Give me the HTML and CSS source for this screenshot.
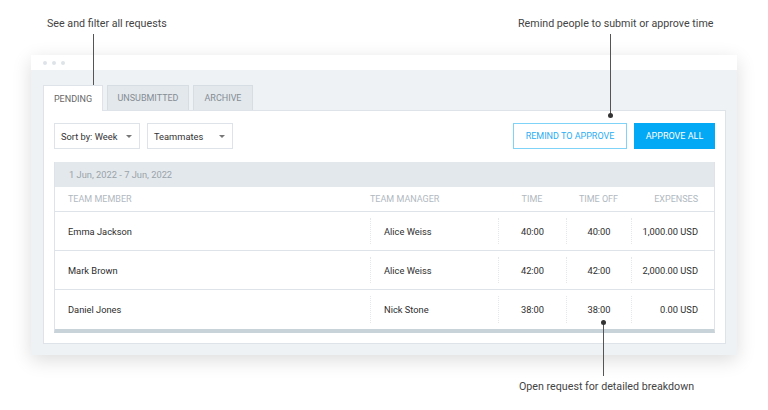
FILE: index.html
```html
<!DOCTYPE html>
<html lang="en">
<head>
    <meta charset="UTF-8">
    <title>Pending requests</title>
    <link rel="stylesheet" href="styles.css">
</head>
<body>
    <div class="stage">
        <div class="window">
            <div class="titlebar">
                <span class="dot"></span><span class="dot"></span><span class="dot"></span>
            </div>
            <div class="window-body">
                <div class="tabs">
                    <div class="tab tab-sm active">PENDING</div>
                    <div class="tab tab-lg">UNSUBMITTED</div>
                    <div class="tab tab-sm">ARCHIVE</div>
                </div>
                <div class="panel">
                    <div class="toolbar">
                        <div class="dropdown">Sort by: Week <span class="caret"></span></div>
                        <div class="dropdown">Teammates <span class="caret"></span></div>
                        <div class="spacer"></div>
                        <button class="btn btn-outline">REMIND TO APPROVE</button>
                        <button class="btn btn-primary">APPROVE ALL</button>
                    </div>

                    <div class="requests">
                        <div class="date-row">1 Jun, 2022 - 7 Jun, 2022</div>
                        <div class="row head">
                            <div class="cell member">TEAM MEMBER</div>
                            <div class="cell manager">TEAM MANAGER</div>
                            <div class="cell center">TIME</div>
                            <div class="cell center">TIME OFF</div>
                            <div class="cell right">EXPENSES</div>
                        </div>
                        <div class="row">
                            <div class="cell member">Emma Jackson</div>
                            <div class="cell manager sep">Alice Weiss</div>
                            <div class="cell center sep">40:00</div>
                            <div class="cell center sep">40:00</div>
                            <div class="cell right sep">1,000.00 USD</div>
                        </div>
                        <div class="row">
                            <div class="cell member">Mark Brown</div>
                            <div class="cell manager sep">Alice Weiss</div>
                            <div class="cell center sep">42:00</div>
                            <div class="cell center sep">42:00</div>
                            <div class="cell right sep">2,000.00 USD</div>
                        </div>
                        <div class="row last">
                            <div class="cell member">Daniel Jones</div>
                            <div class="cell manager sep">Nick Stone</div>
                            <div class="cell center sep">38:00</div>
                            <div class="cell center sep">38:00</div>
                            <div class="cell right sep">0.00 USD</div>
                        </div>
                    </div>
                </div>
            </div>
        </div>

        <!-- callouts -->
        <div class="note note-filter">See and filter all requests</div>
        <div class="pointer pointer-filter"></div>

        <div class="note note-remind">Remind people to submit or approve time</div>
        <div class="pointer pointer-remind"></div>

        <div class="note note-open">Open request for detailed breakdown</div>
        <div class="pointer pointer-open"></div>
    </div>
</body>
</html>
```

FILE: styles.css
```css
body {
    margin: 0;
    background: #fff;
    font-family: Roboto, "Liberation Sans", Arial, sans-serif;
    color: #333;
}
.stage {
    position: relative;
    width: 768px;
    height: 410px;
    padding-top: 55px;
    box-sizing: border-box;
}
.window {
    margin-left: 31px;
    width: 706px;
    height: 300px;
    background: #fff;
    box-shadow: 0 5px 18px rgba(0,0,0,0.14);
    display: flex;
    flex-direction: column;
}
.titlebar {
    flex-shrink: 0;
    height: 15px;
    display: flex;
    align-items: center;
    gap: 5px;
    padding-left: 12px;
}
.dot {
    width: 4px;
    height: 4px;
    border-radius: 50%;
    background: #dde3e8;
}
.window-body {
    flex: 1;
    background: #eef2f5;
    padding: 15px 11px 11px 12px;
    display: flex;
    flex-direction: column;
}
.tabs {
    display: flex;
    gap: 4px;
    height: 25px;
    flex-shrink: 0;
    position: relative;
    z-index: 1;
}
.tab {
    box-sizing: border-box;
    height: 25px;
    display: flex;
    align-items: center;
    justify-content: center;
    font-size: 9px;
    color: #858d94;
    background: #e3e8ec;
    border: 1px solid #d6dde3;
    border-bottom: none;
}
.tab-sm {
    width: 60px;
}
.tab-lg {
    width: 82px;
}
.tab.active {
    background: #fff;
    color: #666;
    height: 26px;
    border-color: #dde3e8;
}
.panel {
    flex: 1;
    background: #fff;
    border: 1px solid #dde3e8;
    padding: 12px 10px 0 10px;
    display: flex;
    flex-direction: column;
}
.toolbar {
    display: flex;
    gap: 7px;
    height: 26px;
    flex-shrink: 0;
}
.dropdown {
    box-sizing: border-box;
    width: 86px;
    height: 26px;
    border: 1px solid #dde3e8;
    display: flex;
    align-items: center;
    justify-content: space-between;
    padding: 0 7px 0 6px;
    font-size: 9.3px;
    color: #333;
    white-space: nowrap;
}
.caret {
    width: 0;
    height: 0;
    border-left: 3px solid transparent;
    border-right: 3px solid transparent;
    border-top: 3px solid #777;
}
.spacer {
    flex: 1;
}
.btn {
    box-sizing: border-box;
    height: 26px;
    font-family: inherit;
    font-size: 9px;
    padding: 0;
    cursor: pointer;
}
.btn-outline {
    width: 114px;
    background: #fff;
    color: #2aaef3;
    border: 1px solid #7fd2f8;
}
.btn-primary {
    width: 81px;
    background: #03a9f4;
    color: #fff;
    border: none;
}
.requests {
    margin-top: 13px;
    border-left: 1px solid #dde3e8;
    border-right: 1px solid #dde3e8;
    border-bottom: 4px solid #c8d2d9;
}
.date-row {
    height: 25px;
    background: #e3e8ec;
    display: flex;
    align-items: center;
    padding-left: 14px;
    font-size: 9.3px;
    color: #9aa3aa;
}
.row {
    box-sizing: border-box;
    display: grid;
    grid-template-columns: 315px 128px 68px 65px 1fr;
    height: 39px;
    border-bottom: 1px solid #dde3e8;
    font-size: 9.3px;
    color: #2e2e2e;
}
.row.last {
    border-bottom: none;
}
.row.head {
    height: 25px;
    font-size: 9px;
    color: #b1b9bf;
}
.cell {
    display: flex;
    align-items: center;
    margin: 6px 0;
}
.row.head .cell {
    margin: 0;
}
.cell.sep {
    border-left: 1px dotted #e4e8eb;
}
.member {
    padding-left: 13px;
}
.row .manager.sep {
    padding-left: 13px;
}
.center {
    justify-content: center;
}
.right {
    justify-content: flex-end;
    padding-right: 16px;
}

/* callouts */
.note {
    position: absolute;
    font-size: 10.7px;
    color: #444;
    white-space: nowrap;
    line-height: 14px;
}
.note-filter {
    left: 47px;
    top: 17px;
}
.note-remind {
    left: 518px;
    top: 17px;
}
.note-open {
    left: 519px;
    top: 380px;
}
.pointer {
    position: absolute;
    width: 1px;
    background: #555;
}
.pointer::after {
    content: "";
    position: absolute;
    left: -2px;
    width: 5px;
    height: 5px;
    border-radius: 50%;
    background: #333;
}
.pointer-filter {
    left: 93px;
    top: 34px;
    height: 54px;
}
.pointer-filter::after,
.pointer-remind::after {
    bottom: -2px;
}
.pointer-remind {
    left: 610px;
    top: 34px;
    height: 82px;
}
.pointer-open {
    left: 603px;
    top: 322px;
    height: 54px;
}
.pointer-open::after {
    top: -2px;
}
```
